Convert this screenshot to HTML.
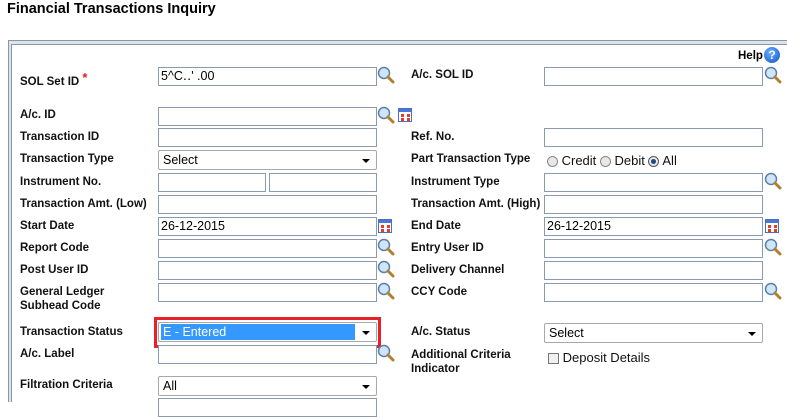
<!DOCTYPE html>
<html><head><style>
body{margin:0;width:787px;height:401px;overflow:hidden;background:#fff;font-family:"Liberation Sans",Arial,sans-serif;position:relative}
.a{position:absolute}
.t{position:absolute;font-size:14.5px;font-weight:bold;left:7px;top:1px;color:#000}
.l{position:absolute;font-size:11.5px;font-weight:bold;color:#111;line-height:14px}
.i{position:absolute;height:17px;border:1px solid #8a9bb0;background:#fff;font-size:12.5px;line-height:17px;padding-left:2px;box-sizing:content-box}
.s{position:absolute;height:18px;border:1px solid #a8a8a8;background:#fff;font-size:12.5px;line-height:18px;padding-left:4px;border-radius:2px}
.s:after{content:"";position:absolute;right:6px;top:8px;border:4px solid transparent;border-top:4px solid #000;border-bottom:0}
.m{position:absolute;width:18px;height:18px}
.c{position:absolute;width:14px;height:14px;border:1px solid #4a6fc0;background:#fff;box-sizing:border-box}
.c:before{content:"";position:absolute;left:0;right:0;top:0;height:3px;background:#4a78d8}
.c i{position:absolute;width:3px;height:3px;background:#e04020}
.r{font-size:13px;color:#111}
.rd{display:inline-block;width:11px;height:11px;border:1px solid #888;border-radius:50%;background:#e8e8e8;vertical-align:-2px;box-sizing:border-box;position:relative}
</style></head><body>
<div class="t">Financial Transactions Inquiry</div>
<div class="a" style="left:8px;top:40px;width:779px;height:361px;border:1px solid #8a96a8;border-right:0;border-bottom:0;background:#dde3ea"></div>
<div class="a" style="left:11px;top:44px;width:776px;height:357px;border-left:1px solid #8a96a8;border-top:1px solid #8a96a8;background:#fff"></div>
<div class="a" style="left:738px;top:50px;font-size:11.5px;font-weight:bold">Help</div>
<div class="a" style="left:764px;top:47px;width:16px;height:16px;border-radius:50%;background:radial-gradient(circle at 40% 35%,#6ab0ff,#1050c8);color:#fff;font-size:12px;font-weight:bold;text-align:center;line-height:16px">?</div>

<svg width="0" height="0" style="position:absolute"><defs><g id="mg"><circle cx="7" cy="7" r="5.5" fill="#cfe6f8" stroke="#5a7fa8" stroke-width="1.5"/><line x1="11" y1="11" x2="16" y2="16" stroke="#b08030" stroke-width="3" stroke-linecap="round"/></g></defs></svg>

<div class="l" style="left:20px;top:71px">SOL Set ID <span style="color:#e02020;font-size:13px;vertical-align:3px">*</span></div>
<div class="l" style="left:20px;top:108px">A/c. ID</div>
<div class="l" style="left:20px;top:130px">Transaction ID</div>
<div class="l" style="left:20px;top:152px">Transaction Type</div>
<div class="l" style="left:20px;top:175px">Instrument No.</div>
<div class="l" style="left:20px;top:197px">Transaction Amt. (Low)</div>
<div class="l" style="left:20px;top:219px">Start Date</div>
<div class="l" style="left:20px;top:241px">Report Code</div>
<div class="l" style="left:20px;top:263px">Post User ID</div>
<div class="l" style="left:20px;top:285px">General Ledger<br>Subhead Code</div>
<div class="l" style="left:20px;top:325px">Transaction Status</div>
<div class="l" style="left:20px;top:347px">A/c. Label</div>
<div class="l" style="left:20px;top:378px">Filtration Criteria</div>

<div class="i" style="left:158px;top:67px;width:215px">5^C‥' .00</div>
<div class="i" style="left:158px;top:107px;width:215px"></div>
<div class="i" style="left:158px;top:128px;width:215px"></div>
<div class="s" style="left:158px;top:150px;width:213px">Select</div>
<div class="i" style="left:158px;top:173px;width:104px"></div>
<div class="i" style="left:269px;top:173px;width:104px"></div>
<div class="i" style="left:158px;top:195px;width:215px"></div>
<div class="i" style="left:158px;top:217px;width:215px">26-12-2015</div>
<div class="i" style="left:158px;top:239px;width:215px"></div>
<div class="i" style="left:158px;top:261px;width:215px"></div>
<div class="i" style="left:158px;top:283px;width:215px"></div>
<div class="a" style="left:154px;top:317px;width:221px;height:25px;border:3px solid #e8202a"></div>
<div class="s" style="left:158px;top:322px;width:213px;background:#fff"><span style="background:#3399ff;color:#fff;display:inline-block;width:192px;margin-left:-2px;padding-left:2px;line-height:16px">E - Entered</span></div>
<div class="i" style="left:158px;top:345px;width:215px"></div>
<div class="s" style="left:158px;top:376px;width:213px">All</div>
<div class="i" style="left:158px;top:398px;width:215px"></div>

<svg class="m" style="left:377px;top:66px"><use href="#mg"/></svg>
<svg class="m" style="left:377px;top:106px"><use href="#mg"/></svg>
<div class="c" style="left:398px;top:108px"><i style="left:2px;top:5px"></i><i style="left:8px;top:5px"></i><i style="left:2px;top:9px"></i><i style="left:8px;top:9px"></i></div>
<div class="c" style="left:378px;top:219px"><i style="left:2px;top:5px"></i><i style="left:8px;top:5px"></i><i style="left:2px;top:9px"></i><i style="left:8px;top:9px"></i></div>
<svg class="m" style="left:377px;top:238px"><use href="#mg"/></svg>
<svg class="m" style="left:377px;top:260px"><use href="#mg"/></svg>
<svg class="m" style="left:377px;top:282px"><use href="#mg"/></svg>
<svg class="m" style="left:377px;top:344px"><use href="#mg"/></svg>

<div class="l" style="left:411px;top:68px">A/c. SOL ID</div>
<div class="l" style="left:411px;top:130px">Ref. No.</div>
<div class="l" style="left:411px;top:152px">Part Transaction Type</div>
<div class="l" style="left:411px;top:175px">Instrument Type</div>
<div class="l" style="left:411px;top:197px">Transaction Amt. (High)</div>
<div class="l" style="left:411px;top:219px">End Date</div>
<div class="l" style="left:411px;top:241px">Entry User ID</div>
<div class="l" style="left:411px;top:263px">Delivery Channel</div>
<div class="l" style="left:411px;top:285px">CCY Code</div>
<div class="l" style="left:411px;top:325px">A/c. Status</div>
<div class="l" style="left:411px;top:348px">Additional Criteria<br>Indicator</div>

<div class="i" style="left:544px;top:67px;width:215px"></div>
<div class="i" style="left:544px;top:128px;width:215px"></div>
<div class="a r" style="left:547px;top:153px"><span class="rd"></span> Credit <span class="rd"></span> Debit <span class="rd" style="border-color:#555"><span style="position:absolute;left:2px;top:2px;width:5px;height:5px;border-radius:50%;background:#1a4a80"></span></span> All</div>
<div class="i" style="left:544px;top:173px;width:215px"></div>
<div class="i" style="left:544px;top:195px;width:215px"></div>
<div class="i" style="left:544px;top:217px;width:215px">26-12-2015</div>
<div class="i" style="left:544px;top:239px;width:215px"></div>
<div class="i" style="left:544px;top:261px;width:215px"></div>
<div class="i" style="left:544px;top:283px;width:215px"></div>
<div class="s" style="left:544px;top:323px;width:213px">Select</div>
<div class="a r" style="left:548px;top:350px"><span style="display:inline-block;width:11px;height:11px;border:1px solid #777;background:#f0f0f0;vertical-align:-2px;box-sizing:border-box"></span> Deposit Details</div>

<svg class="m" style="left:764px;top:66px"><use href="#mg"/></svg>
<svg class="m" style="left:764px;top:172px"><use href="#mg"/></svg>
<div class="c" style="left:765px;top:219px"><i style="left:2px;top:5px"></i><i style="left:8px;top:5px"></i><i style="left:2px;top:9px"></i><i style="left:8px;top:9px"></i></div>
<svg class="m" style="left:764px;top:238px"><use href="#mg"/></svg>
<svg class="m" style="left:764px;top:282px"><use href="#mg"/></svg>
</body></html>
